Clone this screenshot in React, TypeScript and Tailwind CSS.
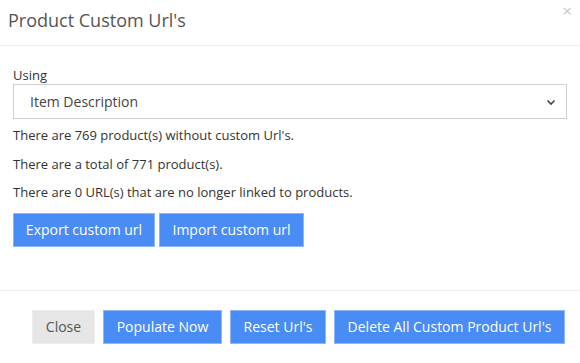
import React from "react";

const font = { fontFamily: '"Open Sans", "Noto Sans", sans-serif' };

function Btn({ children, className = "" }: { children: React.ReactNode; className?: string }) {
  return (
    <button
      className={`h-[34px] text-[14px] text-white bg-[#4a8cf6] border border-[#8db6f9] leading-none flex items-center justify-center ${className}`}
    >
      {children}
    </button>
  );
}

export default function App() {
  return (
    <div className="w-[580px] h-[363px] bg-white text-[#333] flex flex-col" style={font}>
      <div className="h-[46px] border-b border-[#ececec] flex items-start justify-between pl-[8px] pr-[8px]">
        <h1 className="text-[18px] text-[#555] font-normal mt-[8px] leading-[24px]">Product Custom Url's</h1>
        <span className="text-[#c8c8c8] text-[17px] leading-none mt-[2px]">×</span>
      </div>
      <div className="px-[13px] pt-[20px] flex-1">
        <div className="text-[13px] leading-[18px]">Using</div>
        <div className="h-[35px] border border-[#cfcfcf] flex items-center justify-between pl-[16px] pr-[10px]">
          <span className="text-[14px] text-[#444]">Item Description</span>
          <svg width="10" height="7" viewBox="0 0 10 7" className="mt-[1px]">
            <path d="M1.5 1.5 L5 5 L8.5 1.5" stroke="#444" strokeWidth="1.6" fill="none" />
          </svg>
        </div>
        <div className="mt-[7px] text-[13px] leading-[18px] flex flex-col gap-[10.5px]">
          <p>There are 769 product(s) without custom Url's.</p>
          <p>There are a total of 771 product(s).</p>
          <p>There are 0 URL(s) that are no longer linked to products.</p>
        </div>
        <div className="mt-[12px] flex gap-[4px]">
          <Btn className="w-[142px]">Export custom url</Btn>
          <Btn className="w-[145px]">Import custom url</Btn>
        </div>
      </div>
      <div className="border-t border-[#ececec] h-[73px] flex items-start justify-end gap-[8px] pr-[15px] pt-[19px]">
        <button className="h-[34px] w-[63px] text-[14px] text-[#555] bg-[#e6e6e6] border border-[#ededed] leading-none">
          Close
        </button>
        <Btn className="w-[119px]">Populate Now</Btn>
        <Btn className="w-[96px]">Reset Url's</Btn>
        <Btn className="w-[231px]">Delete All Custom Product Url's</Btn>
      </div>
    </div>
  );
}
